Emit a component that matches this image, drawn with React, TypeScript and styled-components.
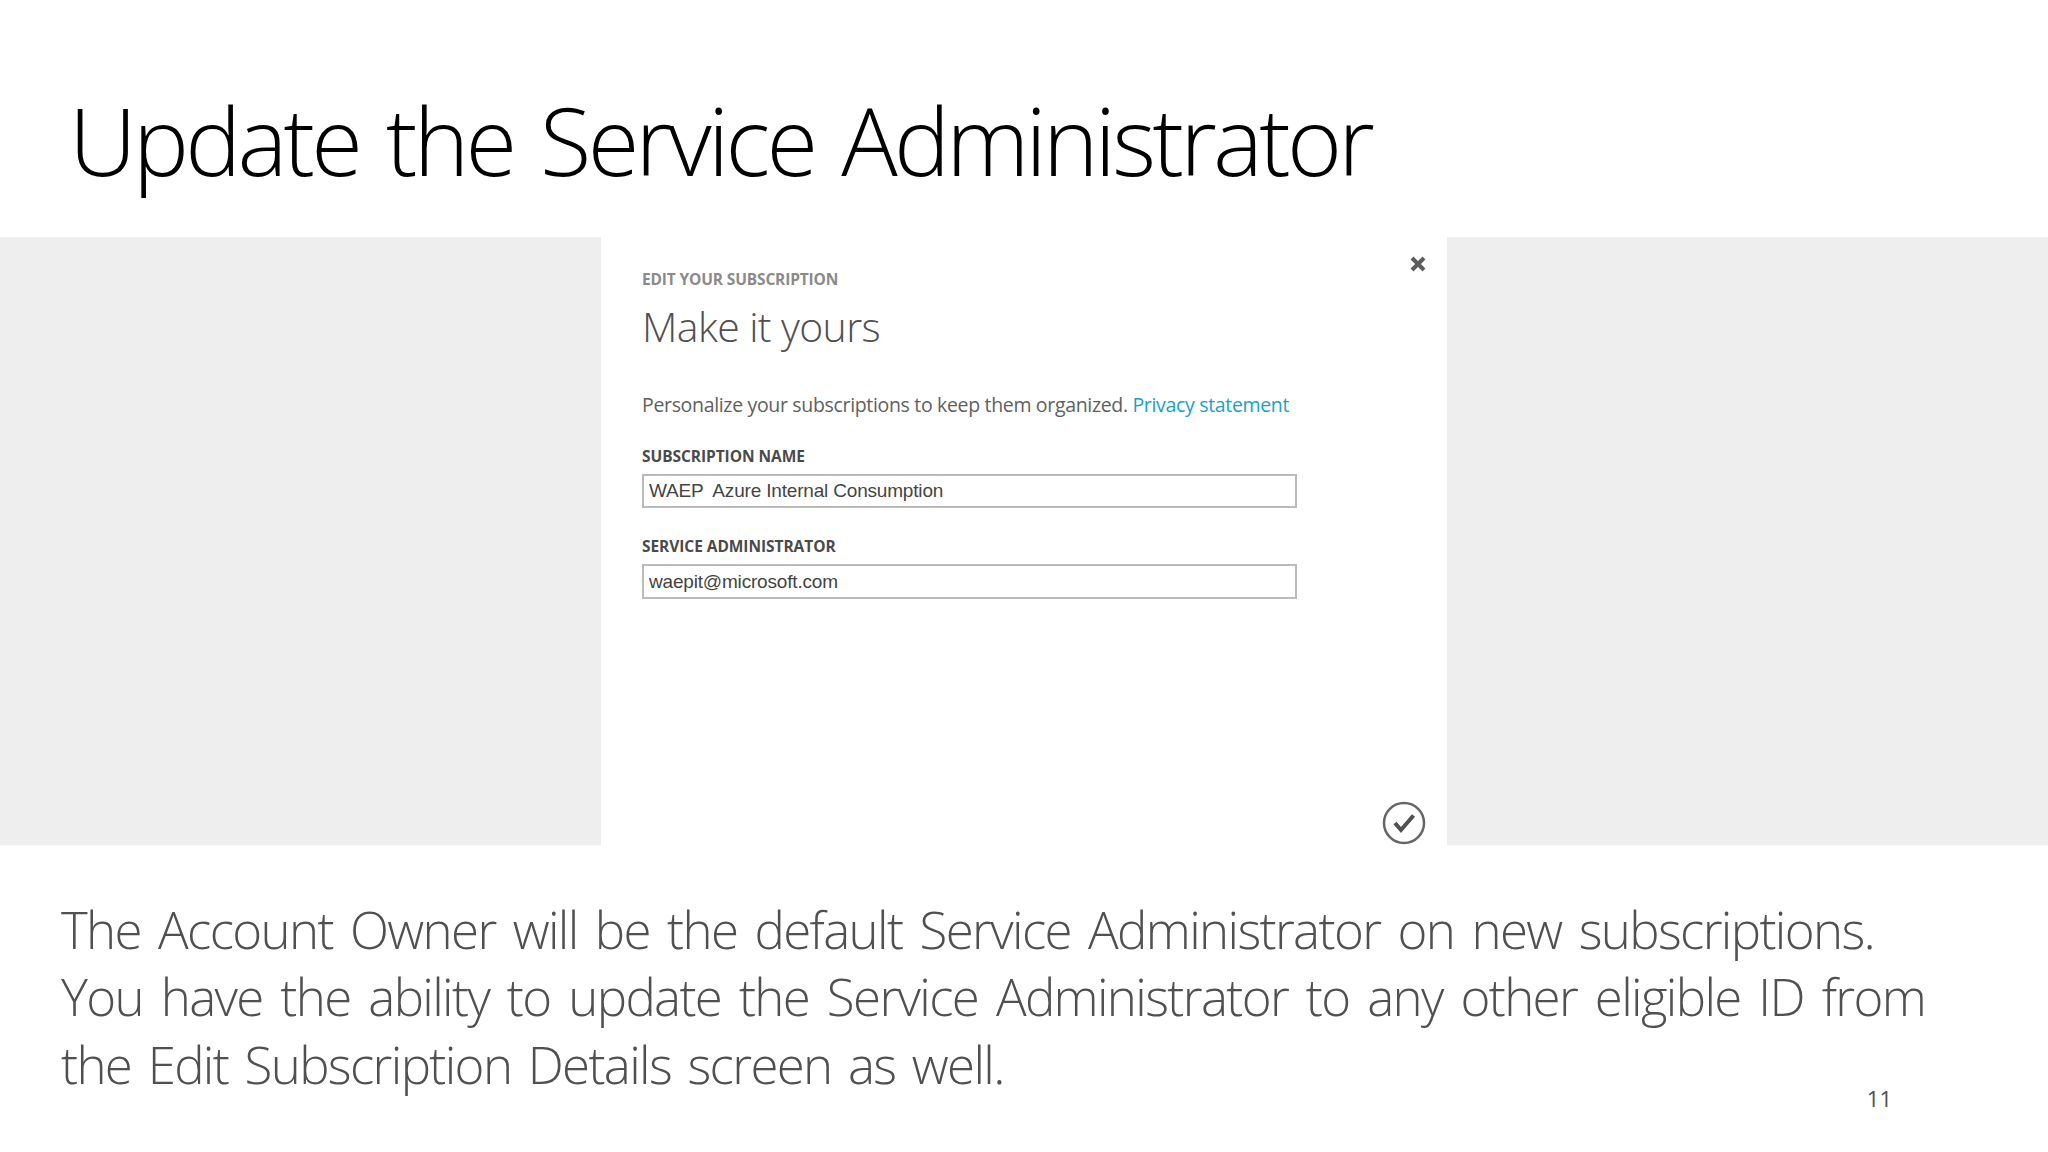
import React from "react";
import styled, { createGlobalStyle } from "styled-components";

const GlobalStyle = createGlobalStyle`
  html, body {
    margin: 0;
    padding: 0;
    background: #fff;
  }
  body {
    font-family: "Open Sans", "Noto Sans", sans-serif;
  }
`;

const Slide = styled.div`
  width: 2048px;
  height: 1152px;
  overflow: hidden;
  background: #fff;
  display: flex;
  flex-direction: column;
`;

const Header = styled.header`
  height: 237px;
  padding: 76px 0 0 69px;
  box-sizing: border-box;
`;

const Title = styled.h1`
  margin: 0;
  font-size: 94px;
  line-height: 128px;
  font-weight: 300;
  letter-spacing: -3.7px;
  word-spacing: 6px;
  color: #000;
  white-space: nowrap;
`;

const Band = styled.section`
  height: 608px;
  display: flex;
  justify-content: center;
  background: #eee;
`;

const Panel = styled.div`
  width: 846px;
  box-sizing: border-box;
  padding: 19px 20px 0 41px;
  background: #fff;
  display: flex;
  flex-direction: column;
`;

const PanelTop = styled.div`
  display: flex;
  justify-content: space-between;
  align-items: flex-start;
`;

const Form = styled.div`
  width: 655px;
  padding-top: 13px;
`;

const Eyebrow = styled.div`
  font-size: 15.5px;
  line-height: 20px;
  font-weight: 700;
  letter-spacing: -0.15px;
  color: #8a8a8a;
  white-space: nowrap;
`;

const DialogTitle = styled.h2`
  margin: 9px 0 0;
  font-size: 41px;
  line-height: 56px;
  font-weight: 300;
  letter-spacing: -0.6px;
  color: #505050;
  white-space: nowrap;
`;

const Intro = styled.p`
  margin: 37px 0 0;
  font-size: 19.5px;
  line-height: 28px;
  font-weight: 400;
  letter-spacing: -0.33px;
  color: #606060;
  white-space: nowrap;
`;

const PrivacyLink = styled.a`
  color: #1ba1c9;
  text-decoration: none;
`;

const Field = styled.div<{ $gap: number }>`
  margin-top: ${(p) => p.$gap}px;
`;

const FieldLabel = styled.label`
  display: block;
  font-size: 15.5px;
  line-height: 20px;
  font-weight: 700;
  letter-spacing: -0.06px;
  color: #4a4a4a;
  white-space: nowrap;
`;

const TextBox = styled.div<{ $height: number }>`
  margin-top: 8px;
  height: ${(p) => p.$height}px;
  box-sizing: border-box;
  border: 2px solid #bbb;
  padding-left: 5px;
  display: flex;
  align-items: center;
  font-family: "Liberation Sans", Arial, sans-serif;
  font-size: 19px;
  letter-spacing: -0.18px;
  color: #444;
  white-space: pre;
`;

const CloseButton = styled.svg`
  width: 16px;
  height: 16px;
  display: block;
  margin-right: 1px;
`;

const ConfirmButton = styled.svg`
  width: 44px;
  height: 44px;
  display: block;
  margin: auto 1px 0 auto;
`;

const Caption = styled.div`
  padding: 51px 0 0 61px;
  font-size: 51px;
  line-height: 67.4px;
  font-weight: 300;
  letter-spacing: -1.65px;
  color: #505050;
  white-space: nowrap;
`;

const CaptionLine = styled.span<{ $wordGap: number }>`
  display: block;
  word-spacing: ${(p) => p.$wordGap}px;
`;

const Footer = styled.footer`
  display: flex;
  justify-content: flex-end;
  padding-right: 156px;
  margin-top: -14px;
`;

const PageNumber = styled.span`
  font-size: 22px;
  line-height: 28px;
  color: #505050;
`;

export default function App() {
  return (
    <>
      <GlobalStyle />
      <Slide>
        <Header>
          <Title>Update the Service Administrator</Title>
        </Header>
        <Band>
          <Panel>
            <PanelTop>
              <Form>
                <Eyebrow>EDIT YOUR SUBSCRIPTION</Eyebrow>
                <DialogTitle>Make it yours</DialogTitle>
                <Intro>
                  Personalize your subscriptions to keep them organized.{" "}
                  <PrivacyLink>Privacy statement</PrivacyLink>
                </Intro>
                <Field $gap={27}>
                  <FieldLabel>SUBSCRIPTION NAME</FieldLabel>
                  <TextBox $height={34}>WAEP  Azure Internal Consumption</TextBox>
                </Field>
                <Field $gap={28}>
                  <FieldLabel>SERVICE ADMINISTRATOR</FieldLabel>
                  <TextBox $height={35}>waepit@microsoft.com</TextBox>
                </Field>
              </Form>
              <CloseButton viewBox="0 0 16 16">
                <path d="M2 2 L14 14 M14 2 L2 14" stroke="#5c5c5c" strokeWidth="4" fill="none" />
              </CloseButton>
            </PanelTop>
            <ConfirmButton viewBox="0 0 44 44">
              <circle cx="22" cy="22" r="20" stroke="#666" strokeWidth="2.5" fill="none" />
              <path d="M13 22 L19 29 L31.5 14.5" stroke="#505050" strokeWidth="4" fill="none" />
            </ConfirmButton>
          </Panel>
        </Band>
        <Caption>
          <CaptionLine $wordGap={5.6}>
            The Account Owner will be the default Service Administrator on new subscriptions.
          </CaptionLine>
          <CaptionLine $wordGap={6.1}>
            You have the ability to update the Service Administrator to any other eligible ID from
          </CaptionLine>
          <CaptionLine $wordGap={4.8}>the Edit Subscription Details screen as well.</CaptionLine>
        </Caption>
        <Footer>
          <PageNumber>11</PageNumber>
        </Footer>
      </Slide>
    </>
  );
}
